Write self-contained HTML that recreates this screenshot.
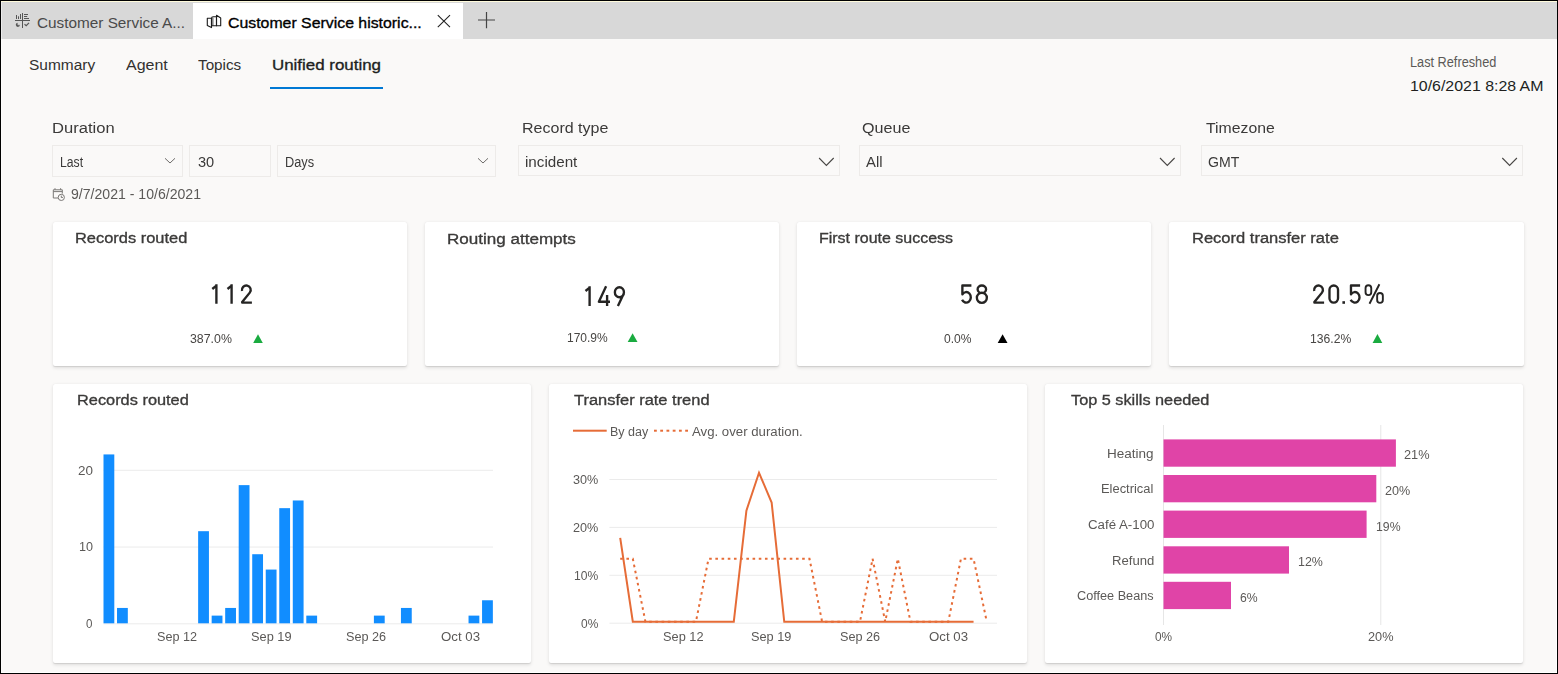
<!DOCTYPE html>
<html lang="en"><head><meta charset="utf-8"><title>Customer Service historical analytics</title>
<style>
html,body{margin:0;padding:0}
body{width:1558px;height:674px;position:relative;overflow:hidden;background:#faf9f8;font-family:"Liberation Sans",sans-serif}
.abs{position:absolute}
.t{position:absolute;white-space:nowrap;transform-origin:0 0;display:block}
.sb{-webkit-text-stroke:0.34px currentColor}
.card{position:absolute;background:#fff;border-radius:2px;box-shadow:0 1.6px 3.6px rgba(0,0,0,.11),0 .3px .9px rgba(0,0,0,.09)}
.box{position:absolute;box-sizing:border-box;border:1px solid #edebe9;background:#faf9f8;height:31px;top:145px}
#tabbar{left:0;top:0;width:1558px;height:39px;background:#d8d8d8}
#tabactive{left:193px;top:3px;width:270px;height:36px;background:#fff}
#ul{left:270px;top:87px;width:113px;height:2px;background:#0078d4}
#gray{position:absolute;left:0;top:0;width:1558px;height:674px;will-change:transform}
.frame{position:absolute;pointer-events:none}
</style></head><body>
<div class="abs" id="tabbar"></div>
<div class="abs" id="tabactive"></div>
<div class="abs" id="ul"></div>

<div class="box" style="left:52px;width:131px;height:32px"></div>
<div class="box" style="left:189px;width:82px;height:32px"></div>
<div class="box" style="left:277px;width:219px;height:32px"></div>
<div class="box" style="left:518px;width:322px"></div>
<div class="box" style="left:859px;width:322px"></div>
<div class="box" style="left:1201px;width:322px"></div>

<div class="card" style="left:52.5px;top:222px;width:354px;height:143.5px"></div>
<div class="card" style="left:425px;top:222px;width:354px;height:143.5px"></div>
<div class="card" style="left:797px;top:222px;width:354px;height:143.5px"></div>
<div class="card" style="left:1169px;top:222px;width:354.5px;height:143.5px"></div>

<div class="card" style="left:52.5px;top:384px;width:478px;height:278.5px"></div>
<div class="card" style="left:548.7px;top:384px;width:478px;height:278.5px"></div>
<div class="card" style="left:1045px;top:384px;width:478.3px;height:278.5px"></div>

<svg class="abs" style="left:0;top:0" width="1558" height="674" viewBox="0 0 1558 674">
<rect x="103.5" y="623.30" width="389.5" height="1" fill="#ebebeb"/>
<rect x="103.5" y="546.54" width="389.5" height="1" fill="#ebebeb"/>
<rect x="103.5" y="469.78" width="389.5" height="1" fill="#ebebeb"/>
<rect x="103.50" y="454.43" width="10.8" height="168.87" fill="#118dff"/>
<rect x="117.02" y="607.95" width="10.8" height="15.35" fill="#118dff"/>
<rect x="198.14" y="531.19" width="10.8" height="92.11" fill="#118dff"/>
<rect x="211.66" y="615.62" width="10.8" height="7.68" fill="#118dff"/>
<rect x="225.18" y="607.95" width="10.8" height="15.35" fill="#118dff"/>
<rect x="238.70" y="485.13" width="10.8" height="138.17" fill="#118dff"/>
<rect x="252.22" y="554.22" width="10.8" height="69.08" fill="#118dff"/>
<rect x="265.74" y="569.57" width="10.8" height="53.73" fill="#118dff"/>
<rect x="279.26" y="508.16" width="10.8" height="115.14" fill="#118dff"/>
<rect x="292.78" y="500.48" width="10.8" height="122.82" fill="#118dff"/>
<rect x="306.30" y="615.62" width="10.8" height="7.68" fill="#118dff"/>
<rect x="373.90" y="615.62" width="10.8" height="7.68" fill="#118dff"/>
<rect x="400.94" y="607.95" width="10.8" height="15.35" fill="#118dff"/>
<rect x="468.54" y="615.62" width="10.8" height="7.68" fill="#118dff"/>
<rect x="482.06" y="600.27" width="10.8" height="23.03" fill="#118dff"/>
<rect x="609.4" y="622.70" width="387.6" height="1" fill="#ebebeb"/>
<rect x="609.4" y="574.80" width="387.6" height="1" fill="#ebebeb"/>
<rect x="609.4" y="526.90" width="387.6" height="1" fill="#ebebeb"/>
<rect x="609.4" y="479.00" width="387.6" height="1" fill="#ebebeb"/>
<polyline points="620.20,558.77 632.82,558.77 645.44,621.76 658.06,621.76 670.68,621.76 683.30,621.76 695.92,621.76 708.54,558.77 721.16,558.77 733.78,558.77 746.40,558.77 759.02,558.77 771.64,558.77 784.26,558.77 796.88,558.77 809.50,558.77 822.12,621.76 834.74,621.76 847.36,621.76 859.98,621.76 872.60,558.77 885.22,621.76 897.84,558.77 910.46,621.76 923.08,621.76 935.70,621.76 948.32,621.76 960.94,558.77 973.56,558.77 986.18,618.89" fill="none" stroke="#e66c37" stroke-width="2" stroke-dasharray="2.6 3.6"/>
<polyline points="620.20,537.94 632.82,621.76 645.44,621.76 658.06,621.76 670.68,621.76 683.30,621.76 695.92,621.76 708.54,621.76 721.16,621.76 733.78,621.76 746.40,510.64 759.02,472.79 771.64,502.49 784.26,621.76 796.88,621.76 809.50,621.76 822.12,621.76 834.74,621.76 847.36,621.76 859.98,621.76 872.60,621.76 885.22,621.76 897.84,621.76 910.46,621.76 923.08,621.76 935.70,621.76 948.32,621.76 960.94,621.76 973.56,621.76" fill="none" stroke="#e66c37" stroke-width="2" stroke-linejoin="miter"/>
<rect x="573" y="429.7" width="33.7" height="2" fill="#e66c37"/>
<rect x="654.00" y="429.7" width="2.8" height="2" fill="#e66c37"/>
<rect x="660.24" y="429.7" width="2.8" height="2" fill="#e66c37"/>
<rect x="666.48" y="429.7" width="2.8" height="2" fill="#e66c37"/>
<rect x="672.72" y="429.7" width="2.8" height="2" fill="#e66c37"/>
<rect x="678.96" y="429.7" width="2.8" height="2" fill="#e66c37"/>
<rect x="685.20" y="429.7" width="2.8" height="2" fill="#e66c37"/>
<rect x="1163" y="425" width="1" height="200" fill="#e6e6e6"/>
<rect x="1380.3" y="425" width="1" height="200" fill="#e6e6e6"/>
<rect x="1163.5" y="439.4" width="232.40" height="27.3" fill="#e044a7"/>
<rect x="1163.5" y="475.0" width="212.80" height="27.3" fill="#e044a7"/>
<rect x="1163.5" y="510.6" width="203.10" height="27.3" fill="#e044a7"/>
<rect x="1163.5" y="546.3" width="125.50" height="27.3" fill="#e044a7"/>
<rect x="1163.5" y="581.8" width="67.50" height="27.3" fill="#e044a7"/>
<g stroke="#555" stroke-width="1" fill="none"><path d="M22.5 13v15M15 20.5h15"/><path d="M16.5 15v4M18.5 16.3v2.7M20.5 14v5"/><path d="M24 14.5h4M24 16.5h3.2M24 18.5h5"/><path d="M24.5 24.3l1.7 1.4 2.8-2.8" stroke-width="1.2"/></g>
<circle cx="17.9" cy="24.8" r="2.1" fill="#555"/>
<path d="M17.9 24.8V22.2A2.6 2.6 0 0 1 20.5 24.8Z" fill="#d8d8d8" stroke="#d8d8d8" stroke-width="0.6"/>
<g stroke="#1b1b1b" stroke-width="1.1" fill="none" stroke-linejoin="round"><path d="M211.5 18.2H207.3V25.4L211.5 27.6Z"/><path d="M211.5 25.7V18.4Q211.5 16.8 213.2 16.8H216.5V25.7Z"/><path d="M216.5 25.7V15.2L220.7 18V25.7Z"/><path d="M212.9 17.6V25.7" stroke-width="0.8"/></g>
<path d="M437.8 15.2L450 27.2M450 15.2L437.8 27.2" stroke="#222" stroke-width="1.1" fill="none"/>
<path d="M486.5 12v16.2M478 20h17" stroke="#444" stroke-width="1.2" fill="none"/>
<path d="M165 158.3L170 163L175 158.3" stroke="#6e6c6a" stroke-width="1" fill="none"/>
<path d="M478 158.3L483 163L488 158.3" stroke="#6e6c6a" stroke-width="1" fill="none"/>
<path d="M819.1 158.0L826.4 165.4L833.6999999999999 158.0" stroke="#484644" stroke-width="1.1" fill="none"/>
<path d="M1160.0 158.0L1167.3 165.4L1174.6 158.0" stroke="#484644" stroke-width="1.1" fill="none"/>
<path d="M1502.3 158.0L1509.6 165.4L1516.8999999999999 158.0" stroke="#484644" stroke-width="1.1" fill="none"/>
<g stroke="#7a7876" stroke-width="1" fill="none"><path d="M58.5 198H53.3V189.8H62.3V193.6"/><path d="M53.3 191.6H62.3"/><path d="M55 188.2v1.6M60.6 188.2v1.6"/><circle cx="61.3" cy="197.4" r="3.1" fill="#faf9f8"/><path d="M61.3 195.6v1.9h1.6"/></g>
<path d="M253.2 343.0L258.00 334.2L262.8 343.0Z" fill="#1aab40"/>
<path d="M627.7 342.0L632.60 333.2L637.5 342.0Z" fill="#1aab40"/>
<path d="M997.7 343.0L1002.60 334.2L1007.5 343.0Z" fill="#000"/>
<path d="M1372.6 343.0L1377.45 334.0L1382.3 343.0Z" fill="#1aab40"/>
<path d="M212.30 289.00L216.40 285.60M216.40 284.30V303.80" fill="none" stroke="#252423" stroke-width="2.35" stroke-linejoin="round"/>
<path d="M227.50 289.00L231.60 285.60M231.60 284.30V303.80" fill="none" stroke="#252423" stroke-width="2.35" stroke-linejoin="round"/>
<path d="M241.99 290.90A4.42 4.42 0 1 1 249.79 292.62L242.18 302.02V302.62H251.90" fill="none" stroke="#252423" stroke-width="2.35" stroke-linejoin="round"/>
<path d="M585.50 291.00L589.60 287.60M589.60 286.30V305.90" fill="none" stroke="#252423" stroke-width="2.35" stroke-linejoin="round"/>
<path d="M606.10 286.30L598.87 301.70H610.00M607.10 294.90V305.90" fill="none" stroke="#252423" stroke-width="2.35" stroke-linejoin="round"/>
<path d="M614.88 292.23A4.53 4.75 0 1 1 623.93 292.23A4.53 4.75 0 1 1 614.88 292.23ZM623.60 294.01L617.90 305.90" fill="none" stroke="#252423" stroke-width="2.35" stroke-linejoin="round"/>
<path d="M971.40 285.48H962.38V294.36A4.62 5.30 0 1 1 962.08 299.73" fill="none" stroke="#252423" stroke-width="2.35" stroke-linejoin="round"/>
<path d="M977.62 289.20A4.23 3.72 0 1 1 986.08 289.20A4.23 3.72 0 1 1 977.62 289.20ZM976.88 297.77A4.98 4.85 0 1 1 986.83 297.77A4.98 4.85 0 1 1 976.88 297.77Z" fill="none" stroke="#252423" stroke-width="2.35" stroke-linejoin="round"/>
<path d="M1314.19 290.90A4.42 4.42 0 1 1 1321.99 292.62L1314.38 302.02V302.62H1324.10" fill="none" stroke="#252423" stroke-width="2.35" stroke-linejoin="round"/>
<path d="M1329.47 289.75A4.28 4.28 0 0 1 1338.03 289.75V298.35A4.28 4.28 0 0 1 1329.47 298.35Z" fill="none" stroke="#252423" stroke-width="2.35" stroke-linejoin="round"/>
<rect x="1342.40" y="301.20" width="2.6" height="2.6" fill="#252423"/>
<path d="M1360.10 285.48H1350.97V294.36A4.68 5.30 0 1 1 1350.68 299.73" fill="none" stroke="#252423" stroke-width="2.35" stroke-linejoin="round"/>
<path d="M1365.55 288.10A2.85 2.85 0 0 1 1371.25 288.10V292.30A2.85 2.85 0 0 1 1365.55 292.30ZM1377.15 295.80A2.85 2.85 0 0 1 1382.85 295.80V300.00A2.85 2.85 0 0 1 1377.15 300.00ZM1379.40 284.30L1369.50 303.80" fill="none" stroke="#252423" stroke-width="1.9"/>
</svg>

<span class="t lcd" style="left:36.70px;top:14px;line-height:17px;font-size:15.5px;color:#4a4a4a;transform:scaleX(0.9881)">Customer Service A...</span>
<span class="t sb lcd" style="left:227.78px;top:14px;line-height:17px;font-size:15.5px;color:#000000;transform:scaleX(1.0225)">Customer Service historic...</span>
<span class="t lcd" style="left:28.83px;top:56px;line-height:17px;font-size:15.5px;color:#323130;transform:scaleX(0.9973)">Summary</span>
<span class="t lcd" style="left:126.24px;top:56px;line-height:17px;font-size:15.5px;color:#323130;transform:scaleX(1.0315)">Agent</span>
<span class="t lcd" style="left:198.24px;top:56px;line-height:17px;font-size:15.5px;color:#323130;transform:scaleX(0.9843)">Topics</span>
<span class="t sb lcd" style="left:272.14px;top:56px;line-height:17px;font-size:15.5px;color:#201f1e;transform:scaleX(1.0907)">Unified routing</span>
<span class="t lcd" style="left:1409.92px;top:54px;line-height:16px;font-size:14px;color:#5b5957;transform:scaleX(0.9089)">Last Refreshed</span>
<span class="t lcd" style="left:1410.11px;top:77px;line-height:17px;font-size:15.5px;color:#201f1e;transform:scaleX(1.0256)">10/6/2021 8:28 AM</span>
<div id="gray">
<span class="t" style="left:51.73px;top:119px;line-height:17px;font-size:15.5px;color:#3b3a39;transform:scaleX(1.0691)">Duration</span>
<span class="t" style="left:522.07px;top:119px;line-height:17px;font-size:15.5px;color:#3b3a39;transform:scaleX(1.0336)">Record type</span>
<span class="t" style="left:862.38px;top:119px;line-height:17px;font-size:15.5px;color:#3b3a39;transform:scaleX(1.0391)">Queue</span>
<span class="t" style="left:1205.60px;top:119px;line-height:17px;font-size:15.5px;color:#3b3a39;transform:scaleX(1.0186)">Timezone</span>
<span class="t" style="left:59.63px;top:154px;line-height:16px;font-size:14px;color:#3b3a39;transform:scaleX(0.8720)">Last</span>
<span class="t" style="left:197.67px;top:154px;line-height:16px;font-size:14px;color:#3b3a39;transform:scaleX(1.0418)">30</span>
<span class="t" style="left:285.20px;top:154px;line-height:16px;font-size:14px;color:#3b3a39;transform:scaleX(0.9128)">Days</span>
<span class="t" style="left:524.65px;top:153px;line-height:17px;font-size:15px;color:#3b3a39;transform:scaleX(1.0123)">incident</span>
<span class="t" style="left:866.10px;top:153px;line-height:17px;font-size:15px;color:#3b3a39;transform:scaleX(0.9916)">All</span>
<span class="t" style="left:1207.99px;top:153px;line-height:17px;font-size:15px;color:#3b3a39;transform:scaleX(0.9394)">GMT</span>
<span class="t" style="left:70.55px;top:186px;line-height:16px;font-size:14px;color:#5b5957;transform:scaleX(1.0061)">9/7/2021 - 10/6/2021</span>
<span class="t sb" style="left:75.14px;top:229px;line-height:17px;font-size:15.5px;color:#3b3a39;transform:scaleX(1.0599)">Records routed</span>
<span class="t sb" style="left:446.55px;top:230px;line-height:17px;font-size:15.5px;color:#3b3a39;transform:scaleX(1.0994)">Routing attempts</span>
<span class="t sb" style="left:818.77px;top:229px;line-height:17px;font-size:15.5px;color:#3b3a39;transform:scaleX(1.0301)">First route success</span>
<span class="t sb" style="left:1192.33px;top:229px;line-height:17px;font-size:15.5px;color:#3b3a39;transform:scaleX(1.0652)">Record transfer rate</span>
<span class="t" style="left:190.17px;top:332px;line-height:14px;font-size:12px;color:#484644;transform:scaleX(1.0292)">387.0%</span>
<span class="t" style="left:566.53px;top:331px;line-height:14px;font-size:12px;color:#484644;transform:scaleX(1.0008)">170.9%</span>
<span class="t" style="left:943.81px;top:332px;line-height:14px;font-size:12px;color:#484644;transform:scaleX(1.0050)">0.0%</span>
<span class="t" style="left:1310.33px;top:332px;line-height:14px;font-size:12px;color:#484644;transform:scaleX(1.0120)">136.2%</span>
<span class="t sb" style="left:76.54px;top:391px;line-height:17px;font-size:15.5px;color:#3b3a39;transform:scaleX(1.0551)">Records routed</span>
<span class="t sb" style="left:573.70px;top:391px;line-height:17px;font-size:15.5px;color:#3b3a39;transform:scaleX(1.0608)">Transfer rate trend</span>
<span class="t sb" style="left:1071.30px;top:391px;line-height:17px;font-size:15.5px;color:#3b3a39;transform:scaleX(1.0494)">Top 5 skills needed</span>
<span class="t" style="left:78.22px;top:464px;line-height:14px;font-size:12px;color:#5b5957;transform:scaleX(1.1199)">20</span>
<span class="t" style="left:78.64px;top:540px;line-height:14px;font-size:12px;color:#5b5957;transform:scaleX(1.0478)">10</span>
<span class="t" style="left:86.11px;top:617px;line-height:14px;font-size:12px;color:#5b5957;transform:scaleX(0.9646)">0</span>
<span class="t" style="left:157.25px;top:630px;line-height:14px;font-size:12px;color:#5b5957;transform:scaleX(1.0540)">Sep 12</span>
<span class="t" style="left:251.47px;top:630px;line-height:14px;font-size:12px;color:#5b5957;transform:scaleX(1.0650)">Sep 19</span>
<span class="t" style="left:346.08px;top:630px;line-height:14px;font-size:12px;color:#5b5957;transform:scaleX(1.0542)">Sep 26</span>
<span class="t" style="left:441.11px;top:630px;line-height:14px;font-size:12px;color:#5b5957;transform:scaleX(1.1029)">Oct 03</span>
<span class="t" style="left:610.30px;top:425px;line-height:14px;font-size:12px;color:#5b5957;transform:scaleX(1.0427)">By day</span>
<span class="t" style="left:691.98px;top:425px;line-height:14px;font-size:12px;color:#5b5957;transform:scaleX(1.1009)">Avg. over duration.</span>
<span class="t" style="left:573.48px;top:473px;line-height:14px;font-size:12px;color:#5b5957;transform:scaleX(1.0519)">30%</span>
<span class="t" style="left:573.45px;top:521px;line-height:14px;font-size:12px;color:#5b5957;transform:scaleX(1.0526)">20%</span>
<span class="t" style="left:574.09px;top:569px;line-height:14px;font-size:12px;color:#5b5957;transform:scaleX(1.0054)">10%</span>
<span class="t" style="left:581.28px;top:617px;line-height:14px;font-size:12px;color:#5b5957;transform:scaleX(0.9945)">0%</span>
<span class="t" style="left:662.95px;top:630px;line-height:14px;font-size:12px;color:#5b5957;transform:scaleX(1.0648)">Sep 12</span>
<span class="t" style="left:751.05px;top:630px;line-height:14px;font-size:12px;color:#5b5957;transform:scaleX(1.0627)">Sep 19</span>
<span class="t" style="left:840.08px;top:630px;line-height:14px;font-size:12px;color:#5b5957;transform:scaleX(1.0542)">Sep 26</span>
<span class="t" style="left:928.77px;top:630px;line-height:14px;font-size:12px;color:#5b5957;transform:scaleX(1.1029)">Oct 03</span>
<span class="t" style="left:1107.42px;top:447px;line-height:14px;font-size:12px;color:#5b5957;transform:scaleX(1.1261)">Heating</span>
<span class="t" style="left:1101.49px;top:482px;line-height:14px;font-size:12px;color:#5b5957;transform:scaleX(1.0743)">Electrical</span>
<span class="t" style="left:1088.07px;top:518px;line-height:14px;font-size:12px;color:#5b5957;transform:scaleX(1.1069)">Café A-100</span>
<span class="t" style="left:1112.42px;top:554px;line-height:14px;font-size:12px;color:#5b5957;transform:scaleX(1.0923)">Refund</span>
<span class="t" style="left:1076.70px;top:589px;line-height:14px;font-size:12px;color:#5b5957;transform:scaleX(1.0564)">Coffee Beans</span>
<span class="t" style="left:1404.16px;top:448px;line-height:14px;font-size:12px;color:#5b5957;transform:scaleX(1.0629)">21%</span>
<span class="t" style="left:1385.23px;top:484px;line-height:14px;font-size:12px;color:#5b5957;transform:scaleX(1.0502)">20%</span>
<span class="t" style="left:1376.42px;top:520px;line-height:14px;font-size:12px;color:#5b5957;transform:scaleX(1.0212)">19%</span>
<span class="t" style="left:1298.06px;top:555px;line-height:14px;font-size:12px;color:#5b5957;transform:scaleX(1.0358)">12%</span>
<span class="t" style="left:1240.19px;top:591px;line-height:14px;font-size:12px;color:#5b5957;transform:scaleX(1.0180)">6%</span>
<span class="t" style="left:1155.44px;top:630px;line-height:14px;font-size:12px;color:#5b5957;transform:scaleX(0.9868)">0%</span>
<span class="t" style="left:1367.80px;top:630px;line-height:14px;font-size:12px;color:#5b5957;transform:scaleX(1.0617)">20%</span>
</div>

<div class="frame" style="left:1px;top:1px;width:1556px;height:1px;background:#fffbdc"></div>
<div class="frame" style="left:1px;top:2px;width:1px;height:37px;background:#ebebeb"></div>
<div class="frame" style="left:1px;top:39px;width:1px;height:633px;background:#fdfdfc"></div>
<div class="frame" style="left:1556px;top:40px;width:1px;height:633px;background:#fff"></div>
<div class="frame" style="left:1px;top:672px;width:1556px;height:1px;background:#fff"></div>
<div class="frame" style="left:0;top:0;width:1556px;height:672px;border:1px solid #000"></div>
</body></html>
